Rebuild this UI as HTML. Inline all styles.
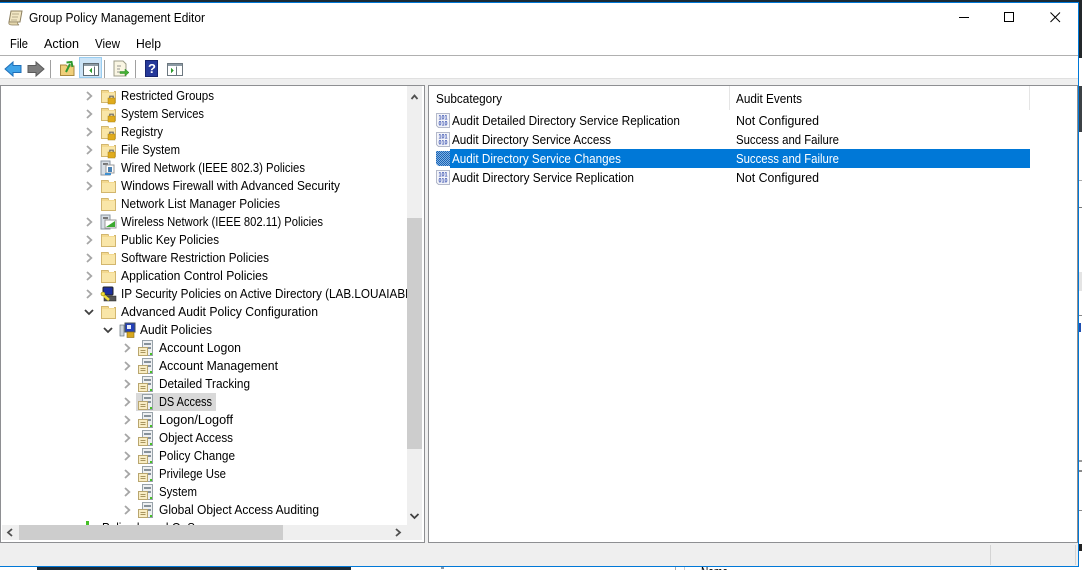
<!DOCTYPE html>
<html><head><meta charset="utf-8"><title>Group Policy Management Editor</title>
<style>
html,body{margin:0;padding:0;background:#fff}
body{width:1082px;height:570px;overflow:hidden}
svg{display:block}
text{font-family:"Liberation Sans",sans-serif;font-size:12.5px;fill:#000}
</style></head><body>
<svg width="1082" height="570" viewBox="0 0 1082 570" xmlns="http://www.w3.org/2000/svg" shape-rendering="crispEdges">
<defs>
<pattern id="chk" width="2" height="2" patternUnits="userSpaceOnUse"><rect width="2" height="2" fill="#7fb2e2"/><rect width="1" height="1" fill="#1c62b4"/><rect x="1" y="1" width="1" height="1" fill="#1c62b4"/></pattern>
<g id="chev"><path d="M-2 -4 L2.300 0 L-2 4" fill="none" stroke="#a6a6a6" stroke-width="1.800" shape-rendering="auto"/></g>
<g id="down"><path d="M-4 -2 L0 2 L4 -2" fill="none" stroke="#404040" stroke-width="1.800" shape-rendering="auto"/></g>
<g id="folder">
<path d="M1.500 2.500 H8 L9 3.500 H15.500 V14.500 H1.500 Z" fill="#f3d98f" stroke="#d2b66e"/>
<rect x="2" y="5" width="13" height="9" fill="#f9e6a8"/>
<rect x="9" y="2" width="5" height="2" fill="#fff"/>
</g>
<g id="lockf"><use href="#folder"/>
<rect x="8" y="10" width="7" height="6" fill="#e0ab1c" stroke="#a88214" stroke-width=".5"/>
<path d="M9.800 10 V8.200 H13.200 V10" fill="none" stroke="#6b6b6b" stroke-width="1.200"/>
</g>
<g id="srv">
<rect x="4.500" y=".5" width="10" height="15" fill="#eef0f2" stroke="#98a2a9"/>
<path d="M6 3.500H13M6 4.500H13M6 7.500H13M6 8.500H13" stroke="#87929a"/>
<rect x=".5" y="7.500" width="9" height="8" fill="#f9edc4" stroke="#b9a66f"/>
<path d="M2.500 10.500H7.500M2.500 12.500H7.500" stroke="#a8955f"/>
<rect x="12" y="13" width="2" height="2" fill="#46c026"/>
</g>
<g id="bin">
<path d="M.5 1.500 H13.500 V15.500 H2.500 L.5 13.500 Z" fill="#f4f5fa" stroke="#b4b9ca"/>
<text x="2.500" y="7.500" textLength="9" lengthAdjust="spacingAndGlyphs" style="font-size:6px;font-weight:bold;fill:#3a52b0">101</text>
<text x="2.500" y="13.500" textLength="9" lengthAdjust="spacingAndGlyphs" style="font-size:6px;font-weight:bold;fill:#3a52b0">010</text>
</g>
<g id="binsel">
<path d="M0 1 H14 V16 H2 L0 14 Z" fill="url(#chk)"/>
</g>
</defs>

<!-- desktop behind window -->
<rect x="0" y="0" width="1082" height="3" fill="#1b2a35"/>
<rect x="1079" y="0" width="3" height="58" fill="#23272a"/>
<rect x="1079" y="58" width="3" height="28" fill="#fff"/>
<rect x="1079" y="86" width="3" height="46" fill="#3c4145"/>
<rect x="1079" y="132" width="3" height="438" fill="#fff"/>
<rect x="1079" y="180" width="3" height="1" fill="#aaa"/>
<rect x="1079" y="207" width="3" height="1" fill="#777"/>
<rect x="1079" y="272" width="3" height="19" fill="#e4e4e4"/>
<rect x="1079" y="315" width="3" height="1" fill="#888"/>
<rect x="1079" y="323" width="2" height="9" fill="#1f4fb0"/>
<rect x="1079" y="460" width="3" height="2" fill="#999"/>
<rect x="1079" y="470" width="3" height="2" fill="#888"/>
<rect x="1079" y="510" width="3" height="1" fill="#888"/>
<rect x="1079" y="544" width="3" height="7" fill="#222"/>
<rect x="0" y="567" width="1082" height="3" fill="#fff"/>
<rect x="37" y="567" width="314" height="3" fill="#1d2a36"/>
<rect x="441" y="567" width="3" height="2" fill="#8899aa"/>
<rect x="675" y="567" width="1" height="3" fill="#aaa"/>
<rect x="684" y="567" width="1" height="3" fill="#ccc"/>
<text x="701" y="576" textLength="27" lengthAdjust="spacingAndGlyphs">Name</text>

<!-- window -->
<rect x="0" y="2" width="1079" height="565" fill="#0078d7"/>
<rect x="0" y="3" width="1078" height="563" fill="#fff"/>

<!-- title -->
<g shape-rendering="auto">
<path d="M11 11 H22 L20 22 H9 Z" fill="#f2e7c4" stroke="#8d8060"/>
<path d="M9 22 Q8 25 12 25 H19 Q17 24 18 22Z" fill="#e4d7ad" stroke="#8d8060" stroke-width=".7"/>
<path d="M12 14H19M12 17H18M11 20H17" stroke="#a59a78" stroke-width=".8"/>
</g>
<text x="29" y="22" textLength="176" lengthAdjust="spacingAndGlyphs">Group Policy Management Editor</text>
<rect x="959" y="17" width="10" height="1" fill="#000"/>
<rect x="1004.500" y="12.500" width="9" height="9" fill="none" stroke="#000"/>
<path d="M1050.500 12.500 L1060 22M1060 12.500 L1050.500 22" stroke="#000" shape-rendering="auto"/>

<!-- menu -->
<text x="10" y="48" textLength="18" lengthAdjust="spacingAndGlyphs">File</text>
<text x="44" y="48" textLength="35" lengthAdjust="spacingAndGlyphs">Action</text>
<text x="95" y="48" textLength="25" lengthAdjust="spacingAndGlyphs">View</text>
<text x="136" y="48" textLength="25" lengthAdjust="spacingAndGlyphs">Help</text>
<rect x="0" y="55" width="1078" height="1" fill="#b0b0b0"/>

<!-- toolbar -->
<g shape-rendering="auto">
<path d="M5 69 L13 62 V65.500 H21 V72.500 H13 V76 Z" fill="#3fa3e8" stroke="#1f6fb8"/>
<path d="M44 69 L36 62 V65.500 H28 V72.500 H36 V76 Z" fill="#7d7d7d" stroke="#5a5a5a"/>
<path d="M60.500 65 H66 L67 66 H74 V75.500 H60.500 Z" fill="#f0cf7a" stroke="#a98a3e"/>
<path d="M66 72 L70 64 M66.500 62.500 L71.500 62 L72.500 67" fill="none" stroke="#2f9a2f" stroke-width="2"/>
</g>
<rect x="50" y="60" width="1" height="18" fill="#a0a0a0"/>
<rect x="79.500" y="57.500" width="22" height="20" fill="#cce4f7" stroke="#99cdf0"/>
<rect x="83.500" y="63.500" width="15" height="12" fill="#fff" stroke="#5f6b73"/>
<rect x="84" y="64" width="14" height="2" fill="#8c9aa4"/>
<path d="M94.500 66.500V75.500" stroke="#5f6b73"/><path d="M92 68 L89 70.500 L92 73Z" fill="#2c9a2c"/>
<rect x="104" y="60" width="1" height="18" fill="#a0a0a0"/>
<g shape-rendering="auto">
<path d="M114 61 H123 L126 64 V76 H114Z" fill="#faf6e3" stroke="#9c9c88"/>
<path d="M117 66H121M117 69H120M117 72H120" stroke="#777" stroke-width=".8"/>
<path d="M120 71.500H125V69L129 72.500L125 76V73.500H120Z" fill="#45b035" stroke="#2e8a26" stroke-width=".5"/>
</g>
<rect x="135" y="60" width="1" height="18" fill="#a0a0a0"/>
<rect x="145.500" y="60.500" width="12" height="16" fill="#26399a" stroke="#17246e"/>
<text x="148" y="73" style="font-size:13px;font-weight:bold;fill:#fff">?</text>
<rect x="167.500" y="63.500" width="15" height="12" fill="#fff" stroke="#6d7880"/>
<rect x="168" y="64" width="14" height="2" fill="#8c9aa4"/>
<path d="M176.500 66.500V75.500" stroke="#6d7880"/><path d="M171 68 L174 70.500 L171 73Z" fill="#2c9a2c"/>
<rect x="0" y="78" width="1078" height="7" fill="#efefef"/>
<rect x="0" y="78" width="1078" height="1" fill="#e0e0e0"/>
<!-- panes area -->
<rect x="0" y="85" width="1078" height="481" fill="#efefef"/>

<!-- left pane -->
<rect x="0.500" y="85.500" width="424" height="457" fill="#fff" stroke="#8e8f92"/>

<!-- tree -->
<g shape-rendering="auto">
<use href="#chev" x="89" y="96"/><use href="#lockf" x="100" y="88"/>
<use href="#chev" x="89" y="114"/><use href="#lockf" x="100" y="106"/>
<use href="#chev" x="89" y="132"/><use href="#lockf" x="100" y="124"/>
<use href="#chev" x="89" y="150"/><use href="#lockf" x="100" y="142"/>
<use href="#chev" x="89" y="168"/>
<g transform="translate(100 160)"><rect x="1" y="1" width="9" height="14" fill="#d8dfe6" stroke="#8a96a0"/><rect x="3" y="3" width="5" height="2" fill="#777"/><rect x="6" y="5" width="8" height="8" fill="#fff" stroke="#999"/><rect x="8" y="7" width="4" height="5" fill="#4a82b4"/><rect x="5" y="13" width="6" height="2" fill="#3f8fd0"/></g>
<use href="#chev" x="89" y="186"/><use href="#folder" x="100" y="178"/>
<use href="#folder" x="100" y="196"/>
<use href="#chev" x="89" y="222"/>
<g transform="translate(100 214)"><rect x="1" y="1" width="9" height="14" fill="#d8dfe6" stroke="#8a96a0"/><rect x="3" y="3" width="5" height="2" fill="#777"/><rect x="5" y="6" width="11" height="8" fill="#fff" stroke="#999"/><path d="M6 13 L15 7 V13Z" fill="#3aa82e"/></g>
<use href="#chev" x="89" y="240"/><use href="#folder" x="100" y="232"/>
<use href="#chev" x="89" y="258"/><use href="#folder" x="100" y="250"/>
<use href="#chev" x="89" y="276"/><use href="#folder" x="100" y="268"/>
<use href="#chev" x="89" y="294"/>
<g transform="translate(100 286)"><rect x="3" y="1" width="10" height="8" rx="1" fill="#1c2f9e" stroke="#222"/><rect x="4" y="10" width="12" height="5" fill="#555" stroke="#222" stroke-width=".5"/><path d="M1 7 L9 14" stroke="#f0de3a" stroke-width="2.500"/><circle cx="3" cy="8" r="2" fill="#f0de3a" stroke="#8a7a10" stroke-width=".5"/></g>
<use href="#down" x="89" y="312"/><use href="#folder" x="100" y="304"/>
<use href="#down" x="108" y="330"/>
<g transform="translate(119 322)"><rect x="1" y="3" width="4" height="11" fill="#cfd6dc" stroke="#67727b" stroke-width=".7"/><rect x="6" y="1" width="10" height="9" fill="#2440b8" stroke="#46515a"/><rect x="8" y="3" width="4" height="4" fill="#e8eefa"/><rect x="8" y="10" width="7" height="5.500" fill="#d8a820" stroke="#8a6a10" stroke-width=".6"/></g>
</g>
<rect x="136" y="393" width="80" height="18" fill="#d9d9d9"/>
<g>
<use href="#chev" x="127" y="348"/><use href="#srv" x="138" y="340"/>
<use href="#chev" x="127" y="366"/><use href="#srv" x="138" y="358"/>
<use href="#chev" x="127" y="384"/><use href="#srv" x="138" y="376"/>
<use href="#chev" x="127" y="402"/><use href="#srv" x="138" y="394"/>
<use href="#chev" x="127" y="420"/><use href="#srv" x="138" y="412"/>
<use href="#chev" x="127" y="438"/><use href="#srv" x="138" y="430"/>
<use href="#chev" x="127" y="456"/><use href="#srv" x="138" y="448"/>
<use href="#chev" x="127" y="474"/><use href="#srv" x="138" y="466"/>
<use href="#chev" x="127" y="492"/><use href="#srv" x="138" y="484"/>
<use href="#chev" x="127" y="510"/><use href="#srv" x="138" y="502"/>
</g>
<text x="121" y="100" textLength="93" lengthAdjust="spacingAndGlyphs">Restricted Groups</text>
<text x="121" y="118" textLength="83" lengthAdjust="spacingAndGlyphs">System Services</text>
<text x="121" y="136" textLength="42" lengthAdjust="spacingAndGlyphs">Registry</text>
<text x="121" y="154" textLength="59" lengthAdjust="spacingAndGlyphs">File System</text>
<text x="121" y="172" textLength="184" lengthAdjust="spacingAndGlyphs">Wired Network (IEEE 802.3) Policies</text>
<text x="121" y="190" textLength="219" lengthAdjust="spacingAndGlyphs">Windows Firewall with Advanced Security</text>
<text x="121" y="208" textLength="159" lengthAdjust="spacingAndGlyphs">Network List Manager Policies</text>
<text x="121" y="226" textLength="202" lengthAdjust="spacingAndGlyphs">Wireless Network (IEEE 802.11) Policies</text>
<text x="121" y="244" textLength="98" lengthAdjust="spacingAndGlyphs">Public Key Policies</text>
<text x="121" y="262" textLength="148" lengthAdjust="spacingAndGlyphs">Software Restriction Policies</text>
<text x="121" y="280" textLength="147" lengthAdjust="spacingAndGlyphs">Application Control Policies</text>
<text x="121" y="298" textLength="292" lengthAdjust="spacingAndGlyphs">IP Security Policies on Active Directory (LAB.LOUAIABE</text>
<text x="121" y="316" textLength="197" lengthAdjust="spacingAndGlyphs">Advanced Audit Policy Configuration</text>
<text x="140" y="334" textLength="72" lengthAdjust="spacingAndGlyphs">Audit Policies</text>
<text x="159" y="352" textLength="82" lengthAdjust="spacingAndGlyphs">Account Logon</text>
<text x="159" y="370" textLength="119" lengthAdjust="spacingAndGlyphs">Account Management</text>
<text x="159" y="388" textLength="91" lengthAdjust="spacingAndGlyphs">Detailed Tracking</text>
<text x="159" y="406" textLength="53" lengthAdjust="spacingAndGlyphs">DS Access</text>
<text x="159" y="424" textLength="74" lengthAdjust="spacingAndGlyphs">Logon/Logoff</text>
<text x="159" y="442" textLength="74" lengthAdjust="spacingAndGlyphs">Object Access</text>
<text x="159" y="460" textLength="76" lengthAdjust="spacingAndGlyphs">Policy Change</text>
<text x="159" y="478" textLength="67" lengthAdjust="spacingAndGlyphs">Privilege Use</text>
<text x="159" y="496" textLength="38" lengthAdjust="spacingAndGlyphs">System</text>
<text x="159" y="514" textLength="160" lengthAdjust="spacingAndGlyphs">Global Object Access Auditing</text>
<rect x="86" y="521" width="3" height="4" fill="#46c026"/>
<text x="102" y="532" textLength="93" lengthAdjust="spacingAndGlyphs">Policy-based QoS</text>

<!-- scrollbars, drawn over the tree so it clips at their edges -->
<rect x="407" y="86" width="15" height="439" fill="#efefef"/>
<rect x="407" y="218" width="15" height="231" fill="#cdcdcd"/>
<rect x="422" y="86" width="2" height="456" fill="#fff"/>
<path d="M411.500 99 L414.500 95.500 L417.500 99" fill="none" stroke="#505050" stroke-width="1.800" shape-rendering="auto"/>
<use href="#down" x="414.500" y="516"/>
<rect x="2" y="525" width="420" height="15" fill="#efefef"/>
<rect x="1" y="540" width="423" height="2" fill="#fff"/>
<rect x="19" y="525" width="264" height="15" fill="#cdcdcd"/>
<path d="M12 529 L8 532.500 L12 536" fill="none" stroke="#505050" stroke-width="1.800" shape-rendering="auto"/>
<path d="M396 529 L400 532.500 L396 536" fill="none" stroke="#505050" stroke-width="1.800" shape-rendering="auto"/>

<!-- right pane -->
<rect x="428.500" y="85.500" width="649" height="457" fill="#fff" stroke="#8e8f92"/>
<rect x="729" y="86" width="1" height="24" fill="#e5e5e5"/>
<rect x="1029" y="86" width="1" height="24" fill="#e5e5e5"/>
<text x="436" y="103" textLength="66" lengthAdjust="spacingAndGlyphs">Subcategory</text>
<text x="736" y="103" textLength="66" lengthAdjust="spacingAndGlyphs">Audit Events</text>
<rect x="450" y="149" width="580" height="19" fill="#0078d7"/>
<use href="#bin" x="436" y="112"/>
<use href="#bin" x="436" y="131"/>
<use href="#binsel" x="436" y="150"/>
<use href="#bin" x="436" y="169"/>
<text x="452" y="125" textLength="228" lengthAdjust="spacingAndGlyphs">Audit Detailed Directory Service Replication</text>
<text x="452" y="144" textLength="159" lengthAdjust="spacingAndGlyphs">Audit Directory Service Access</text>
<text x="452" y="163" textLength="169" lengthAdjust="spacingAndGlyphs" style="fill:#fff">Audit Directory Service Changes</text>
<text x="452" y="182" textLength="182" lengthAdjust="spacingAndGlyphs">Audit Directory Service Replication</text>
<text x="736" y="125" textLength="83" lengthAdjust="spacingAndGlyphs">Not Configured</text>
<text x="736" y="144" textLength="103" lengthAdjust="spacingAndGlyphs">Success and Failure</text>
<text x="736" y="163" textLength="103" lengthAdjust="spacingAndGlyphs" style="fill:#fff">Success and Failure</text>
<text x="736" y="182" textLength="83" lengthAdjust="spacingAndGlyphs">Not Configured</text>

<!-- status bar -->
<rect x="0" y="543" width="1078" height="23" fill="#efefef"/>
<rect x="990" y="545" width="1" height="20" fill="#d4d4d4"/>
<rect x="1075" y="545" width="1" height="20" fill="#d4d4d4"/>
</svg>
</body></html>
